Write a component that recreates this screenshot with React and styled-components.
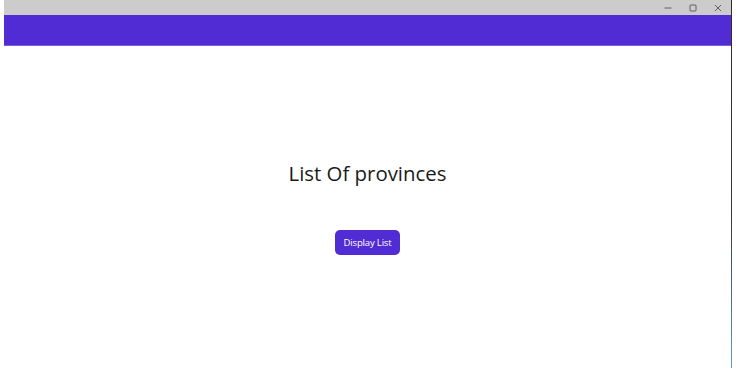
import styled, { createGlobalStyle } from 'styled-components'

const GlobalStyle = createGlobalStyle`
  html, body {
    margin: 0;
    padding: 0;
    background: #ffffff;
  }
  body {
    font-family: "Open Sans", "Noto Sans", sans-serif;
  }
`

const Screen = styled.div`
  width: 743px;
  height: 378px;
  background: #ffffff;
  padding-left: 4px;
  box-sizing: border-box;
`

const Window = styled.div`
  width: 728px;
  height: 368px;
  display: flex;
  flex-direction: column;
  background: #ffffff;
  box-sizing: border-box;
  border-right: 1px solid;
  border-image: linear-gradient(#2b2b2b, #3a3a3a 60%, #5b9fd8) 1;
`

const TitleBar = styled.div`
  height: 15px;
  background: #cccccc;
  display: flex;
  justify-content: flex-end;
  align-items: center;
  padding-right: 1px;
`

const Control = styled.button`
  width: 25px;
  height: 15px;
  border: none;
  background: transparent;
  padding: 0;
  display: flex;
  align-items: center;
  justify-content: center;
  color: #444444;
`

const NavBar = styled.div`
  height: 30px;
  background: #512bd4;
  border-bottom: 1px solid #7a5ee2;
`

const Content = styled.main`
  flex: 1;
  display: flex;
  flex-direction: column;
  align-items: center;
  padding-top: 113px;
`

const Heading = styled.h1`
  margin: 0;
  font-family: "Open Sans", "Noto Sans", sans-serif;
  font-weight: 400;
  font-size: 20.4px;
  line-height: 28px;
  color: #1a1a1a;
`

const PrimaryButton = styled.button`
  margin-top: 43px;
  height: 25px;
  padding: 0 9px;
  border: none;
  border-radius: 5px;
  background: #512bd4;
  color: #ffffff;
  font-family: "Open Sans", "Noto Sans", sans-serif;
  font-size: 9.6px;
  font-weight: 500;
  letter-spacing: -0.2px;
`

const App = () => {
  return (
    <>
      <GlobalStyle />
      <Screen>
        <Window>
          <TitleBar>
            <Control aria-label="Minimize">
              <svg width="8" height="8" viewBox="0 0 8 8">
                <path d="M0.5 4h7" stroke="currentColor" strokeWidth="0.8" />
              </svg>
            </Control>
            <Control aria-label="Maximize">
              <svg width="8" height="8" viewBox="0 0 8 8">
                <rect x="1" y="1" width="6" height="6" rx="0.8" fill="none" stroke="currentColor" strokeWidth="0.8" />
              </svg>
            </Control>
            <Control aria-label="Close">
              <svg width="8" height="8" viewBox="0 0 8 8">
                <path d="M1 1l6 6M7 1l-6 6" stroke="currentColor" strokeWidth="0.8" />
              </svg>
            </Control>
          </TitleBar>
          <NavBar />
          <Content>
            <Heading>List Of provinces</Heading>
            <PrimaryButton>Display List</PrimaryButton>
          </Content>
        </Window>
      </Screen>
    </>
  )
}

export default App
